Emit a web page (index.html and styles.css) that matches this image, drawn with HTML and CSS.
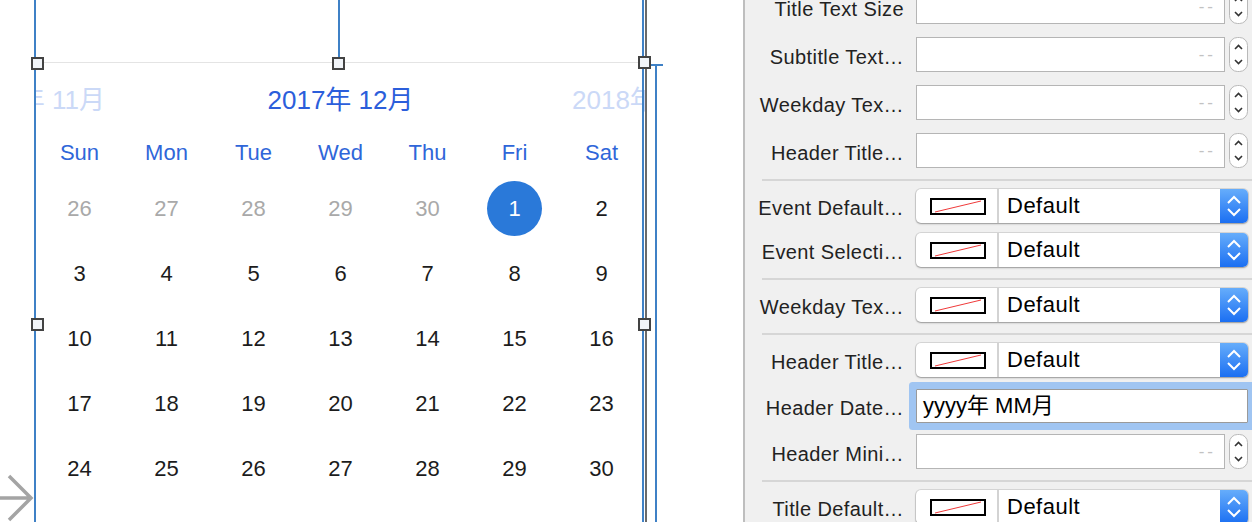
FILE: index.html
```html
<!DOCTYPE html>
<html lang="zh">
  <head>
    <meta charset="UTF-8" />
    <title>Storyboard</title>
    <link rel="stylesheet" href="styles.css">
  </head>
  <body>
    <div class="app">
      <div class="canvas">
        <svg class="entry-arrow" width="36" height="52" viewBox="0 0 36 52">
          <path d="M0 24 H31 M9 2 L31 24 L9 46" fill="none" stroke="#a4a4a4" stroke-width="3.5" />
        </svg>

        <div class="scene">
          <div class="scene-top"></div>
          <div class="calendar">
            <div class="cal-header">
              <span class="cal-title cal-title--prev">2017年 11月</span>
              <span class="cal-title">2017年 12月</span>
              <span class="cal-title cal-title--next">2018年 1月</span>
            </div>
            <div class="weekdays">
              <span>Sun</span><span>Mon</span><span>Tue</span><span>Wed</span><span>Thu</span><span>Fri</span><span>Sat</span>
            </div>
            <div class="days">
              <span class="muted">26</span><span class="muted">27</span><span class="muted">28</span><span class="muted">29</span><span class="muted">30</span><span class="selected"><i>1</i></span><span>2</span>
              <span>3</span><span>4</span><span>5</span><span>6</span><span>7</span><span>8</span><span>9</span>
              <span>10</span><span>11</span><span>12</span><span>13</span><span>14</span><span>15</span><span>16</span>
              <span>17</span><span>18</span><span>19</span><span>20</span><span>21</span><span>22</span><span>23</span>
              <span>24</span><span>25</span><span>26</span><span>27</span><span>28</span><span>29</span><span>30</span>
            </div>
          </div>

          <!-- constraint guides + resize handles -->
          <div class="guide guide--top"></div>
          <div class="guide guide--right"></div>
          <div class="guide guide--edge"></div>
          <div class="guide guide--pin"></div>
          <div class="handle h-tl"></div>
          <div class="handle h-tc"></div>
          <div class="handle h-tr"></div>
          <div class="handle h-ml"></div>
          <div class="handle h-mr"></div>
        </div>
      </div>

      <div class="inspector">
        <div class="row row--first">
          <label>Title Text Size</label>
          <div class="num"><div class="field">--</div><svg class="stepper" width="19" height="35" viewBox="0 0 19 35"><rect x="0.5" y="0.5" width="18" height="34" rx="8" fill="#fff" stroke="#b9b9b9"/><path d="M6 12 L9.5 8.5 L13 12 M6 23 L9.5 26.5 L13 23" fill="none" stroke="#333" stroke-width="1.6"/></svg></div>
        </div>
        <div class="row">
          <label>Subtitle Text…</label>
          <div class="num"><div class="field">--</div><svg class="stepper" width="19" height="35" viewBox="0 0 19 35"><rect x="0.5" y="0.5" width="18" height="34" rx="8" fill="#fff" stroke="#b9b9b9"/><path d="M6 12 L9.5 8.5 L13 12 M6 23 L9.5 26.5 L13 23" fill="none" stroke="#333" stroke-width="1.6"/></svg></div>
        </div>
        <div class="row">
          <label>Weekday Tex…</label>
          <div class="num"><div class="field">--</div><svg class="stepper" width="19" height="35" viewBox="0 0 19 35"><rect x="0.5" y="0.5" width="18" height="34" rx="8" fill="#fff" stroke="#b9b9b9"/><path d="M6 12 L9.5 8.5 L13 12 M6 23 L9.5 26.5 L13 23" fill="none" stroke="#333" stroke-width="1.6"/></svg></div>
        </div>
        <div class="row">
          <label>Header Title…</label>
          <div class="num"><div class="field">--</div><svg class="stepper" width="19" height="35" viewBox="0 0 19 35"><rect x="0.5" y="0.5" width="18" height="34" rx="8" fill="#fff" stroke="#b9b9b9"/><path d="M6 12 L9.5 8.5 L13 12 M6 23 L9.5 26.5 L13 23" fill="none" stroke="#333" stroke-width="1.6"/></svg></div>
        </div>

        <div class="sep"></div>

        <div class="row row--popup">
          <label>Event Default…</label>
          <div class="popup">
            <div class="popup-swatch"><svg width="56" height="17" viewBox="0 0 56 17"><rect x="1" y="1" width="54" height="15" fill="#fff" stroke="#000" stroke-width="2"/><path d="M5 14 L51 3" stroke="#f03a3a" stroke-width="1"/></svg></div>
            <div class="popup-value">Default</div>
            <div class="popup-arrows"><svg width="28" height="34" viewBox="0 0 28 34"><path d="M8 14 L14 8 L20 14 M8 20 L14 26 L20 20" fill="none" stroke="#fff" stroke-width="2"/></svg></div>
          </div>
        </div>
        <div class="row row--popup">
          <label>Event Selecti…</label>
          <div class="popup">
            <div class="popup-swatch"><svg width="56" height="17" viewBox="0 0 56 17"><rect x="1" y="1" width="54" height="15" fill="#fff" stroke="#000" stroke-width="2"/><path d="M5 14 L51 3" stroke="#f03a3a" stroke-width="1"/></svg></div>
            <div class="popup-value">Default</div>
            <div class="popup-arrows"><svg width="28" height="34" viewBox="0 0 28 34"><path d="M8 14 L14 8 L20 14 M8 20 L14 26 L20 20" fill="none" stroke="#fff" stroke-width="2"/></svg></div>
          </div>
        </div>

        <div class="sep"></div>

        <div class="row row--popup">
          <label>Weekday Tex…</label>
          <div class="popup">
            <div class="popup-swatch"><svg width="56" height="17" viewBox="0 0 56 17"><rect x="1" y="1" width="54" height="15" fill="#fff" stroke="#000" stroke-width="2"/><path d="M5 14 L51 3" stroke="#f03a3a" stroke-width="1"/></svg></div>
            <div class="popup-value">Default</div>
            <div class="popup-arrows"><svg width="28" height="34" viewBox="0 0 28 34"><path d="M8 14 L14 8 L20 14 M8 20 L14 26 L20 20" fill="none" stroke="#fff" stroke-width="2"/></svg></div>
          </div>
        </div>

        <div class="sep"></div>

        <div class="row row--popup">
          <label>Header Title…</label>
          <div class="popup">
            <div class="popup-swatch"><svg width="56" height="17" viewBox="0 0 56 17"><rect x="1" y="1" width="54" height="15" fill="#fff" stroke="#000" stroke-width="2"/><path d="M5 14 L51 3" stroke="#f03a3a" stroke-width="1"/></svg></div>
            <div class="popup-value">Default</div>
            <div class="popup-arrows"><svg width="28" height="34" viewBox="0 0 28 34"><path d="M8 14 L14 8 L20 14 M8 20 L14 26 L20 20" fill="none" stroke="#fff" stroke-width="2"/></svg></div>
          </div>
        </div>
        <div class="row row--focus">
          <label>Header Date…</label>
          <div class="text-input">yyyy年 MM月</div>
        </div>
        <div class="row">
          <label>Header Mini…</label>
          <div class="num"><div class="field">--</div><svg class="stepper" width="19" height="35" viewBox="0 0 19 35"><rect x="0.5" y="0.5" width="18" height="34" rx="8" fill="#fff" stroke="#b9b9b9"/><path d="M6 12 L9.5 8.5 L13 12 M6 23 L9.5 26.5 L13 23" fill="none" stroke="#333" stroke-width="1.6"/></svg></div>
        </div>

        <div class="sep"></div>

        <div class="row row--popup">
          <label>Title Default…</label>
          <div class="popup">
            <div class="popup-swatch"><svg width="56" height="17" viewBox="0 0 56 17"><rect x="1" y="1" width="54" height="15" fill="#fff" stroke="#000" stroke-width="2"/><path d="M5 14 L51 3" stroke="#f03a3a" stroke-width="1"/></svg></div>
            <div class="popup-value">Default</div>
            <div class="popup-arrows"><svg width="28" height="34" viewBox="0 0 28 34"><path d="M8 14 L14 8 L20 14 M8 20 L14 26 L20 20" fill="none" stroke="#fff" stroke-width="2"/></svg></div>
          </div>
        </div>
      </div>
    </div>
  </body>
</html>
```

FILE: styles.css
```css
html,
body {
  margin: 0;
  height: 100%;
  overflow: hidden;
}
body {
  font-family: "Liberation Sans", "Noto Sans CJK SC", sans-serif;
}
.app {
  display: flex;
  height: 522px;
}

/* storyboard canvas */
.canvas {
  position: relative;
  width: 743px;
  flex: none;
  background: #fff;
  overflow: hidden;
}
.entry-arrow {
  position: absolute;
  left: 0;
  top: 474px;
}
.scene {
  position: relative;
  margin-left: 34px;
  width: 609px;
  height: 100%;
  border-left: 2px solid #3f81c6;
}
.scene-top {
  height: 62px;
}
.calendar {
  border-top: 1px solid #e4e4e4;
}
.cal-header {
  position: relative;
  height: 75px;
  line-height: 75px;
  text-align: center;
  overflow: hidden;
}
.cal-title {
  font-size: 26px;
  color: #2b5edb;
}
.cal-title--prev,
.cal-title--next {
  position: absolute;
  top: 0;
  color: #cbd9f7;
  white-space: nowrap;
}
.cal-title--prev {
  right: 540px;
}
.cal-title--next {
  left: 536px;
}
.weekdays,
.days {
  display: grid;
  grid-template-columns: repeat(7, 1fr);
  text-align: center;
}
.weekdays {
  height: 30px;
  line-height: 30px;
  font-size: 22px;
  color: #2f66d9;
}
.days {
  margin-top: 8px;
  grid-auto-rows: 65px;
  font-size: 22px;
  color: #1c1c1c;
}
.days span {
  display: flex;
  align-items: center;
  justify-content: center;
}
.days .muted {
  color: #a9a9a9;
}
.days .selected i {
  font-style: normal;
  width: 55px;
  height: 55px;
  border-radius: 50%;
  background: #2a79d9;
  color: #fff;
  display: flex;
  align-items: center;
  justify-content: center;
}

.guide {
  position: absolute;
  background: #3f81c6;
}
.guide--top {
  left: 302px;
  top: 0;
  width: 2px;
  height: 57px;
}
.guide--right {
  left: 606px;
  top: 0;
  bottom: 0;
  width: 2px;
}
.guide--edge {
  left: 609px;
  top: 0;
  bottom: 0;
  width: 2px;
  background: #6a6a6a;
}
.guide--pin {
  left: 619px;
  top: 64px;
  bottom: 0;
  width: 2px;
}
.guide--pin::before {
  content: "";
  position: absolute;
  left: -4px;
  top: 0;
  width: 12px;
  height: 2px;
  background: #3f81c6;
}
.handle {
  position: absolute;
  width: 9px;
  height: 9px;
  border: 2px solid #434343;
  background: #f1f4f8;
}
.h-tl { left: -5px; top: 57px; }
.h-tc { left: 296px; top: 57px; }
.h-tr { left: 602px; top: 56px; }
.h-ml { left: -5px; top: 318px; }
.h-mr { left: 602px; top: 318px; }

/* attributes inspector */
.inspector {
  flex: 1;
  display: flex;
  flex-direction: column;
  background: #f0f0f0;
  border-left: 2px solid #bebebe;
  overflow: hidden;
}
.row {
  display: grid;
  grid-template-columns: 159px 1fr;
  column-gap: 12px;
  align-items: center;
  margin-top: 13px;
  flex: none;
}
.row--first {
  margin-top: -11px;
}
.row--popup {
  margin-top: 10px;
}
.row--focus {
  margin-top: 12px;
}
.row--focus + .row {
  margin-top: 11px;
}
.sep {
  flex: none;
  height: 2px;
  margin: 11px 0 0 17px;
  background: #d6d6d6;
}
.sep + .row {
  margin-top: 8px;
}
.row label {
  padding-top: 5px;
  text-align: right;
  white-space: nowrap;
  font-size: 20px;
  letter-spacing: 0.4px;
  color: #222;
}
.num {
  display: flex;
  align-items: center;
  gap: 4px;
}
.field {
  height: 33px;
  border: 1px solid #b5b5b5;
  background: #fff;
  display: flex;
  align-items: center;
  justify-content: flex-end;
  padding-right: 8px;
  box-sizing: content-box;
  width: 299px;
  font-size: 17px;
  letter-spacing: 3px;
  color: #c2c2c2;
}
.stepper {
  display: block;
}
.popup {
  display: flex;
  width: 332px;
  height: 34px;
  background: #fff;
  border-radius: 5px;
  overflow: hidden;
  box-shadow: 0 0 0 1px rgba(0, 0, 0, 0.1), 0 1px 2px rgba(0, 0, 0, 0.3);
}
.popup-swatch {
  width: 67px;
  padding-left: 14px;
  display: flex;
  align-items: center;
  border-right: 2px solid #d3d3d3;
}
.popup-value {
  flex: 1;
  padding-left: 8px;
  font-size: 22px;
  letter-spacing: 0.5px;
  line-height: 34px;
  color: #000;
}
.popup-arrows {
  width: 28px;
  background: linear-gradient(#66adfb, #1b6ff2);
}
.popup-arrows svg {
  display: block;
}
.text-input {
  width: 324px;
  height: 32px;
  padding-left: 6px;
  border: 1px solid #9a9a9a;
  background: #fff;
  border-radius: 1px;
  box-shadow: 0 0 0 7px #a0c5f2;
  font-size: 22px;
  line-height: 32px;
  color: #000;
}
```
